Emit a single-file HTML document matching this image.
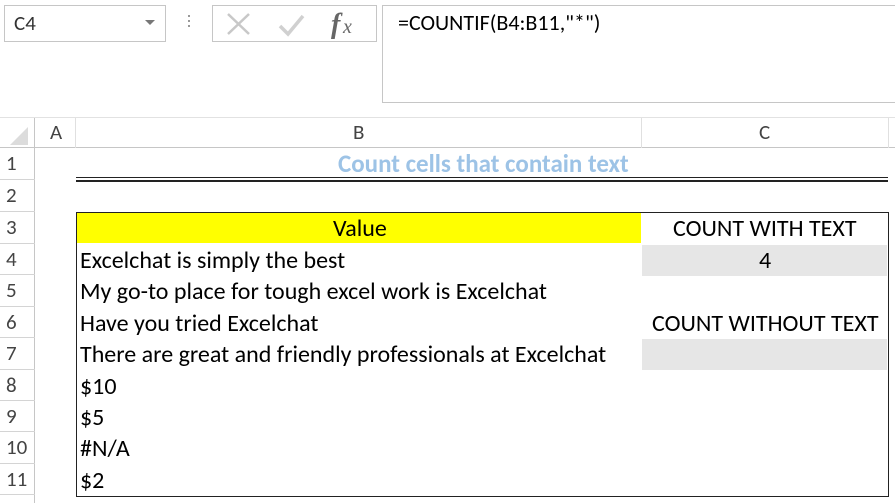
<!DOCTYPE html><html><head><style>
body{margin:0;width:895px;height:503px;background:#fff;position:relative;overflow:hidden;font-family:Carlito,"Liberation Sans",sans-serif;}
.a{position:absolute;}
.t{position:absolute;font-size:24px;color:#000;white-space:nowrap;line-height:24px;}
.rh{position:absolute;left:0;width:35px;font-size:21px;color:#444;border-bottom:1px solid #d4d4d4;box-sizing:border-box;}
.rh span{position:absolute;left:6px;line-height:21px;}
</style></head><body>
<!-- formula bar -->
<div class="a" style="left:4px;top:5px;width:162px;height:37px;border:1px solid #c6c6c6;box-sizing:border-box"></div>
<div class="t" style="left:14px;top:13px;font-size:21px;line-height:21px;color:#333">C4</div>
<div class="a" style="left:145px;top:20px;width:0;height:0;border-left:5px solid transparent;border-right:5px solid transparent;border-top:5px solid #777"></div>
<div class="a" style="left:188px;top:15px;width:2px;height:2px;background:#999;box-shadow:0 5px #999,0 10px #999"></div>
<div class="a" style="left:212px;top:5px;width:165px;height:37px;border:1px solid #c6c6c6;box-sizing:border-box"></div>
<svg class="a" style="left:225px;top:10px" width="140" height="30"><path d="M3 4L24 24M24 4L3 24" stroke="#c8c8c8" stroke-width="2.5"/><path d="M55 16L63 24L78 6" stroke="#d0d0d0" stroke-width="3.5" fill="none"/><text x="106" y="23" font-family="Liberation Serif" font-style="italic" font-weight="bold" font-size="28" fill="#666">f</text><text x="118" y="23" font-family="Liberation Serif" font-style="italic" font-size="20" fill="#666">x</text></svg>
<div class="a" style="left:382px;top:5px;width:520px;height:98px;border:1px solid #c6c6c6;box-sizing:border-box"></div>
<div class="t" style="left:398px;top:12px;font-size:22px;line-height:22px">=COUNTIF(B4:B11,"*")</div>
<!-- column headers -->
<div class="a" style="left:0;top:117px;width:895px;height:31px;border-bottom:1px solid #c6c6c6;border-top:1px solid #e2e2e2;box-sizing:border-box"></div>
<div class="a" style="left:10px;top:127px;width:0;height:0;border-left:18px solid transparent;border-bottom:18px solid #dcdcdc"></div>
<div class="a" style="left:34px;top:118px;width:1px;height:385px;background:#c6c6c6"></div>
<div class="a" style="left:75px;top:118px;width:1px;height:30px;background:#e0e0e0"></div>
<div class="a" style="left:641px;top:118px;width:1px;height:30px;background:#e0e0e0"></div>
<div class="a" style="left:888px;top:118px;width:1px;height:30px;background:#e0e0e0"></div>
<div class="t" style="left:50px;top:122px;font-size:21px;line-height:21px;color:#444">A</div>
<div class="t" style="left:353px;top:122px;font-size:21px;line-height:21px;color:#444">B</div>
<div class="t" style="left:759px;top:122px;font-size:21px;line-height:21px;color:#444">C</div>
<!-- row headers -->
<div class="rh" style="top:148px;height:32px"><span style="top:5px">1</span></div>
<div class="rh" style="top:180px;height:32px"><span style="top:5px">2</span></div>
<div class="rh" style="top:212px;height:32px"><span style="top:5px">3</span></div>
<div class="rh" style="top:244px;height:31px"><span style="top:5px">4</span></div>
<div class="rh" style="top:275px;height:32px"><span style="top:5px">5</span></div>
<div class="rh" style="top:307px;height:31px"><span style="top:5px">6</span></div>
<div class="rh" style="top:338px;height:32px"><span style="top:5px">7</span></div>
<div class="rh" style="top:370px;height:31px"><span style="top:5px">8</span></div>
<div class="rh" style="top:401px;height:31px"><span style="top:5px">9</span></div>
<div class="rh" style="top:432px;height:32px"><span style="top:5px">10</span></div>
<div class="rh" style="top:464px;height:31px"><span style="top:5px">11</span></div>
<!-- title -->
<div class="t" style="left:338px;top:152px;color:#9dc3e6;font-weight:bold;font-size:25px">Count cells that contain text</div>
<div class="a" style="left:76px;top:177px;width:812px;height:1px;background:#222"></div>
<div class="a" style="left:76px;top:180px;width:812px;height:2px;background:#222"></div>
<!-- table -->
<div class="a" style="left:77px;top:213px;width:564px;height:30px;background:#ffff00"></div>
<div class="a" style="left:642px;top:245px;width:245px;height:31px;background:#e6e6e6"></div>
<div class="a" style="left:642px;top:339px;width:245px;height:31px;background:#e6e6e6"></div>
<div class="a" style="left:76px;top:212px;width:813px;height:285px;border:1px solid #222;box-sizing:border-box"></div>
<div class="t" style="left:333px;top:217px">Value</div>
<div class="t" style="left:673px;top:217px">COUNT WITH TEXT</div>
<div class="t" style="left:759px;top:249px">4</div>
<div class="t" style="left:652px;top:312px">COUNT WITHOUT TEXT</div>
<div class="t" style="left:80px;top:249px">Excelchat is simply the best</div>
<div class="t" style="left:80px;top:280px">My go-to place for tough excel work is Excelchat</div>
<div class="t" style="left:80px;top:312px">Have you tried Excelchat</div>
<div class="t" style="left:80px;top:343px">There are great and friendly professionals at Excelchat</div>
<div class="t" style="left:80px;top:375px">$10</div>
<div class="t" style="left:80px;top:406px">$5</div>
<div class="t" style="left:80px;top:437px">#N/A</div>
<div class="t" style="left:80px;top:469px">$2</div>
</body></html>
